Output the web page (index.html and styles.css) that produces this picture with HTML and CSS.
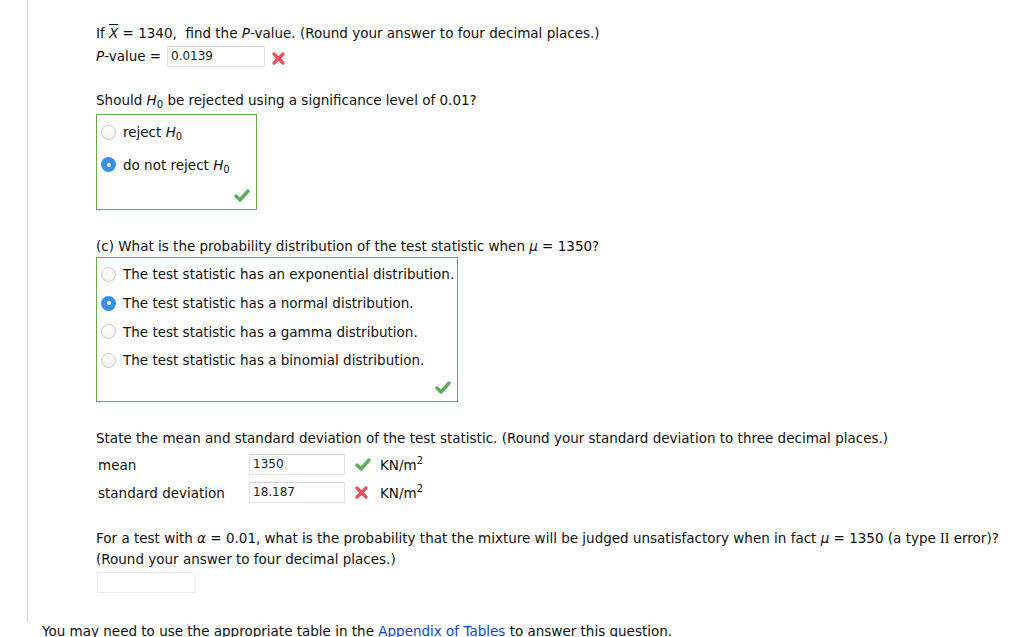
FILE: index.html
```html
<!DOCTYPE html>
<html>
<head>
<meta charset="utf-8">
<link rel="stylesheet" href="styles.css">
</head>
<body>
<div class="frame">
  <div class="content">
    <p class="line first">If <span class="xbar">X</span> = 1340,&nbsp; find the <i>P</i>-value. (Round your answer to four decimal places.)</p>
    <div class="row pval">
      <span class="lbl"><i>P</i>-value =</span>
      <span class="field w98">0.0139</span>
      <span class="icon-x"><svg width="13" height="13" viewBox="0 0 13 13"><path d="M2 2 L11 11 M11 2 L2 11" stroke="#ea4f5c" stroke-width="3.2" stroke-linecap="round"/></svg></span>
    </div>

    <p class="line q2">Should <i>H</i><sub>0</sub> be rejected using a significance level of 0.01?</p>
    <div class="box box1">
      <div class="opt o33"><span class="radio"></span><span>reject <i>H</i><sub>0</sub></span></div>
      <div class="opt o33"><span class="radio on"></span><span>do not reject <i>H</i><sub>0</sub></span></div>
      <div class="boxfoot f27"><svg class="check" width="16" height="13" viewBox="0 0 16 13"><path d="M2 7 L6 11 L14 2" fill="none" stroke="#5cae5c" stroke-width="3.4" stroke-linecap="round" stroke-linejoin="round"/></svg></div>
    </div>

    <p class="line q3">(c) What is the probability distribution of the test statistic when <i>μ</i> = 1350?</p>
    <div class="box box2">
      <div class="opt o29"><span class="radio"></span><span>The test statistic has an exponential distribution.</span></div>
      <div class="opt o29"><span class="radio on"></span><span>The test statistic has a normal distribution.</span></div>
      <div class="opt o29"><span class="radio"></span><span>The test statistic has a gamma distribution.</span></div>
      <div class="opt o29"><span class="radio"></span><span>The test statistic has a binomial distribution.</span></div>
      <div class="boxfoot f25"><svg class="check" width="16" height="13" viewBox="0 0 16 13"><path d="M2 7 L6 11 L14 2" fill="none" stroke="#5cae5c" stroke-width="3.4" stroke-linecap="round" stroke-linejoin="round"/></svg></div>
    </div>

    <p class="line q4">State the mean and standard deviation of the test statistic. (Round your standard deviation to three decimal places.)</p>
    <div class="grid">
      <span class="glbl">mean</span>
      <span class="field w96">1350</span>
      <span class="gicon"><svg width="16" height="13" viewBox="0 0 16 13"><path d="M2 7 L6 11 L14 2" fill="none" stroke="#5cae5c" stroke-width="3.4" stroke-linecap="round" stroke-linejoin="round"/></svg></span>
      <span class="unit">KN/m<sup>2</sup></span>

      <span class="glbl">standard deviation</span>
      <span class="field w96">18.187</span>
      <span class="gicon"><svg width="13" height="13" viewBox="0 0 13 13"><path d="M2 2 L11 11 M11 2 L2 11" stroke="#ea4f5c" stroke-width="3.2" stroke-linecap="round"/></svg></span>
      <span class="unit">KN/m<sup>2</sup></span>
    </div>

    <p class="line q5">For a test with <i>α</i> = 0.01, what is the probability that the mixture will be judged unsatisfactory when in fact <i>μ</i> = 1350 (a type <span class="roman">II</span> error)?<br>(Round your answer to four decimal places.)</p>
    <div class="field empty"></div>
  </div>
</div>
<p class="footer">You may need to use the appropriate table in the <a href="#">Appendix of Tables</a> to answer this question.</p>
</body>
</html>
```

FILE: styles.css
```css
html, body {
  margin: 0;
  padding: 0;
  background: #fff;
}
body {
  font-family: "DejaVu Sans", Verdana, sans-serif;
  font-size: 13.5px;
  color: #111;
  width: 1024px;
  height: 637px;
  overflow: hidden;
}
.frame {
  margin-left: 27px;
  border-left: 1px solid #d6d6d6;
  height: 622px;
}
.content {
  padding-left: 68px;
  padding-top: 23px;
}
.line {
  margin: 0;
  line-height: 20px;
  white-space: nowrap;
}
sub {
  font-size: 10px;
  font-style: normal;
  vertical-align: -3px;
  line-height: 0;
}
sup {
  font-size: 10px;
  vertical-align: 6px;
  line-height: 0;
}
.xbar {
  font-style: italic;
  text-decoration: overline;
}
.roman { font-family: "Liberation Serif", serif; font-size: 14px; }

.row {
  display: flex;
  align-items: center;
  height: 24px;
  margin-top: 1px;
}
.pval .lbl { width: 71px; }
.field {
  box-sizing: border-box;
  height: 21px;
  border: 1px solid #e3e3e3;
  border-top-color: #d4d4d4;
  font-size: 12px;
  line-height: 19px;
  padding-left: 3px;
  color: #222;
  display: inline-block;
}
.w98 { width: 98px; }
.w96 { width: 96px; }
.icon-x { margin-left: 7px; display: flex; margin-top: 4px; }

.q2 { margin-top: 22px; }
.box {
  border: 1px solid #6aaa4a;
  box-sizing: border-box;
}
.box1 { width: 161px; padding-top: 1px; margin-top: 4px; }
.box2 { width: 362px; padding-top: 2px; margin-top: 1px; }
.opt {
  display: flex;
  align-items: center;
  padding-left: 4px;
  white-space: nowrap;
}
.o33 { height: 32.5px; }
.o29 { height: 28.7px; }
.radio {
  box-sizing: border-box;
  width: 15px;
  height: 15px;
  border-radius: 50%;
  border: 1px solid #c8c8c8;
  background: linear-gradient(#fff, #f2f2f2);
  margin-right: 7px;
  flex: none;
  position: relative;
}
.radio.on {
  border: none;
  background: #3a8ee6;
}
.radio.on::after {
  content: "";
  position: absolute;
  width: 4px;
  height: 4px;
  border-radius: 50%;
  background: #fff;
  left: 5.5px;
  top: 5.5px;
}
.boxfoot {
  display: flex;
  justify-content: flex-end;
  align-items: center;
  padding-right: 6px;
}
.f27 { height: 28px; }
.f25 { height: 26px; }

.q3 { margin-top: 26px; }
.q4 { margin-top: 26px; }

.grid {
  display: grid;
  grid-template-columns: 151px 96px 35px auto;
  grid-auto-rows: 28px;
  align-items: center;
  margin-top: 3px;
  margin-left: 2px;
}
.gicon { display: flex; padding-left: 10px; }

.q5 { margin-top: 21px; }
.field.empty {
  width: 99px;
  margin-top: 3px;
  margin-left: 1px;
  border-color: #ececec;
}

.footer {
  margin: 0;
  padding-left: 42px;
  line-height: 18px;
  white-space: nowrap;
}
.footer a {
  color: #1a3fc8;
  text-decoration: none;
}
```
